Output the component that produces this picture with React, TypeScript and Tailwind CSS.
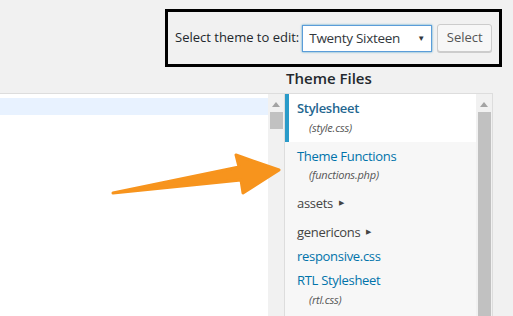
const FONT = "font-['Open_Sans','Noto_Sans',sans-serif]";

function ScrollUp() {
  return (
    <svg width="8" height="5" viewBox="0 0 8 5" className="mx-auto">
      <path d="M0 5 L4 0 L8 5 Z" fill="#a3a3a3" />
    </svg>
  );
}

function Arrow() {
  return (
    <svg className="pointer-events-none absolute left-0 top-0" width="513" height="316" viewBox="0 0 513 316">
      <path
        d="M113 193 L239 167 L236 155 L279 170 L243 193 L241 180 Z"
        fill="#f7941d"
        stroke="#f7941d"
        strokeWidth="3"
        strokeLinejoin="round"
      />
    </svg>
  );
}

const item = "text-[13px] tracking-[-0.3px] leading-[20px]";
const file = "pl-[12px] text-[11px] italic tracking-[-0.2px] text-[#555]";

export default function App() {
  return (
    <div className={`relative h-[316px] w-[513px] overflow-hidden bg-[#f1f1f1] ${FONT}`}>
      <div className="flex justify-end pr-[11px] pt-[9px]">
        <div className="flex h-[58px] w-[337px] items-center border-[3px] border-black pl-[7px]">
          <span className="text-[13px] text-[#23282d]">Select theme to edit:</span>
          <div className="ml-[3px] flex h-[27px] w-[130px] items-center justify-between border border-[#5b9dd9] bg-white pl-[6px] pr-[6px] shadow-[0_0_2px_rgba(30,140,190,0.8)]">
            <span className="text-[13.5px] tracking-[-0.3px] text-[#32373c]">Twenty Sixteen</span>
            <span className="text-[8px] text-[#32373c]">▼</span>
          </div>
          <button className="ml-[5px] flex h-[28px] w-[55px] items-center justify-center rounded-[3px] border border-[#ccc] bg-[#f7f7f7] text-[13px] text-[#555] shadow-[0_1px_0_#ccc]">
            Select
          </button>
        </div>
      </div>

      <div className="flex">
        <div className="w-[284px] pt-[26px]">
          <div className="flex h-[240px] border-t border-[#ddd] bg-white">
            <div className="flex-1 pt-[4px]">
              <div className="h-[17px] bg-[#e8f2ff]" />
            </div>
            <div className="w-[16px] bg-[#f1f1f1] pt-[8px]">
              <ScrollUp />
              <div className="mx-auto mt-[5px] h-[17px] w-[13px] bg-[#c1c1c1]" />
            </div>
          </div>
        </div>

        <div className="w-[209px]">
          <div className="h-[26px] pl-[2px] text-[15px] font-semibold leading-[22px] text-[#23282d]">Theme Files</div>
          <div className="flex h-[240px] border-x border-t border-[#ddd] bg-[#f7f7f7]">
            <div className="flex-1">
              <div className="h-[48px] border-l-4 border-[#2a9bc9] bg-white pl-[8px] pt-[4px]">
                <div className={`${item} font-semibold text-[#23668f]`}>Stylesheet</div>
                <div className={`${file} leading-[20px]`}>(style.css)</div>
              </div>
              <div className="pl-[12px]">
                <div className={`${item} pt-[4px] text-[#0073aa]`}>Theme Functions</div>
                <div className={`${file} leading-[18px]`}>(functions.php)</div>
                <div className={`${item} mt-[9px] flex items-center gap-[6px] text-[#444]`}>
                  assets <span className="text-[7px]">▶</span>
                </div>
                <div className={`${item} mt-[9px] flex items-center gap-[6px] text-[#444]`}>
                  genericons <span className="text-[7px]">▶</span>
                </div>
                <div className={`${item} mt-[4px] text-[#0073aa]`}>responsive.css</div>
                <div className={`${item} mt-[4px] text-[#0073aa]`}>RTL Stylesheet</div>
                <div className={`${file} leading-[20px]`}>(rtl.css)</div>
              </div>
            </div>
            <div className="w-[16px] bg-[#f1f1f1] pt-[8px]">
              <ScrollUp />
              <div className="mx-auto mt-[5px] h-[230px] w-[13px] bg-[#c1c1c1]" />
            </div>
          </div>
        </div>
      </div>

      <Arrow />
    </div>
  );
}
